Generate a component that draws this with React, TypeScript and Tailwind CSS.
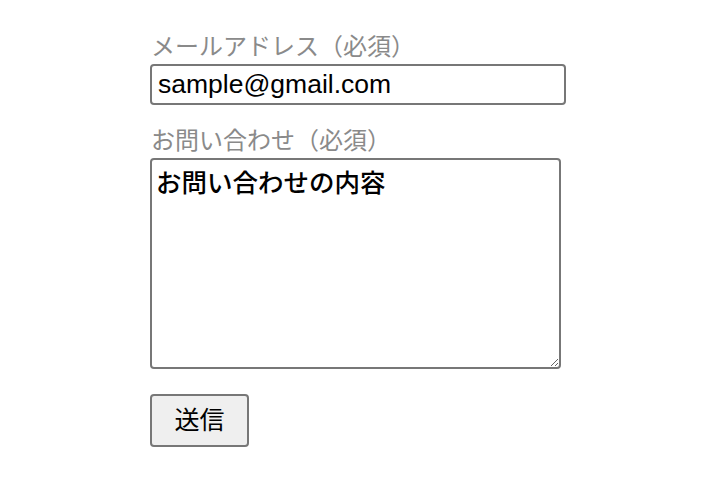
import React from 'react';

export default function App() {
  return (
    <div className="min-h-[486px] w-[712px] bg-white font-['Liberation_Sans','Noto_Sans_CJK_JP',sans-serif]">
      <form
        className="flex flex-col items-start pl-[150px] pt-[33px]"
        onSubmit={(e) => e.preventDefault()}
      >
        <label className="pl-px text-[24px] leading-[28px] text-[#8a8a8a]">
          メールアドレス（必須）
        </label>
        <input
          type="email"
          defaultValue="sample@gmail.com"
          className="mt-[3px] h-[41px] w-[416px] rounded-[4px] border-2 border-[#777777] px-[6px] font-['Liberation_Sans','Noto_Sans_CJK_JP',sans-serif] text-[26.5px] text-black outline-none"
        />
        <label className="mt-[22px] pl-px text-[24px] leading-[28px] text-[#8a8a8a]">
          お問い合わせ（必須）
        </label>
        <textarea
          defaultValue="お問い合わせの内容"
          className="mt-[3px] h-[211px] w-[411px] rounded-[4px] border-2 border-[#777777] px-[4px] py-[8px] font-['Liberation_Sans','Noto_Sans_CJK_JP',sans-serif] text-[25.5px] leading-[30px] font-medium text-black outline-none"
        />
        <button
          type="submit"
          className="mt-[25px] h-[53px] w-[99px] rounded-[4px] border-2 border-[#777777] bg-[#efefef] font-['Liberation_Sans','Noto_Sans_CJK_JP',sans-serif] text-[25px] text-black"
        >
          送信
        </button>
      </form>
    </div>
  );
}
